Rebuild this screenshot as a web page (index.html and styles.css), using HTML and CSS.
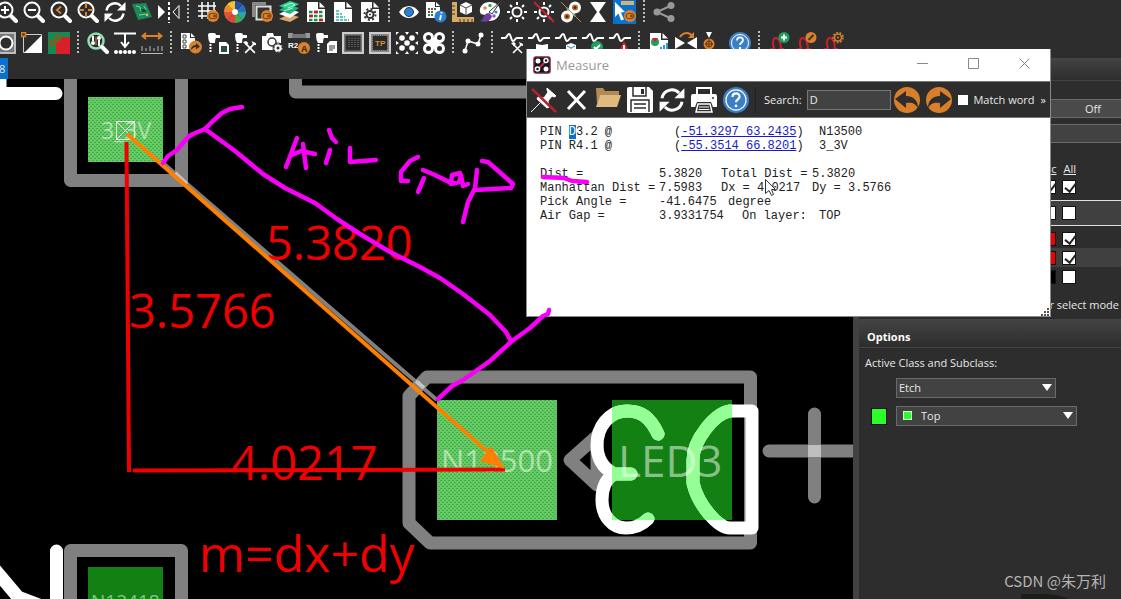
FILE: index.html
```
<!DOCTYPE html>
<html lang="en">
<head>
    <meta charset="UTF-8">
    <meta name="viewport" content="width=device-width, initial-scale=1.0">
    <title>Measure - PCB Editor</title>
    <link rel="stylesheet" href="styles.css">
</head>
<body>
    <!-- shared icon parts -->
    <svg class="sprite" aria-hidden="true">
        <symbol id="mag" viewBox="0 0 22 22"><circle cx="9" cy="9" r="7.5" fill="none" stroke="#fff" stroke-width="2"/><path d="M15 15l5 5" stroke="#fff" stroke-width="4" stroke-linecap="round"/></symbol>
        <symbol id="refresh" viewBox="0 0 22 22"><path d="M2.500 9.500A8.500 8.500 0 0 1 17 5M19.500 12.500A8.500 8.500 0 0 1 5 17" fill="none" stroke="#fff" stroke-width="2.500"/><path d="M21.500 1v8.500H13zM.500 21v-8.500H9z" fill="#fff"/></symbol>
        <symbol id="doc" viewBox="0 0 22 22"><path d="M2 1h11v7h7v13H2zM14.500 1l5.500 5.500h-5.500z" fill="#fff"/></symbol>
        <symbol id="pill" viewBox="0 0 12 12"><circle cx="6" cy="6" r="6" fill="#d9822b"/><rect x="2" y="3.500" width="8" height="5" rx="2.500" fill="none" stroke="#6b3d10"/><circle cx="7.500" cy="6" r="1.300" fill="#6b3d10"/></symbol>
        <symbol id="drill" viewBox="0 0 22 22"><path d="M1 3q0-2 2-2h4q2 0 2 2h4v3H9q-1 1-1 5H3Q1 8 1 3z" fill="#fff"/><path d="M3.500 12v9" stroke="#fff" stroke-width="2" stroke-dasharray="2 1"/></symbol>
        <symbol id="wave" viewBox="0 0 22 22"><path d="M0 6h4c2 0 2-4 4-4s2 7 4 7 2-3 4-3h6" fill="none" stroke="#fff" stroke-width="2"/></symbol>
        <symbol id="cross-tools" viewBox="0 0 12 12"><path d="M2 11l9-9M2 2l9 9" stroke="#fff" stroke-width="1.600"/><path d="M0 1l3 3 2-2-2-2M8 0l1 3 3 1V2" fill="#fff"/></symbol>
        <symbol id="help" viewBox="0 0 22 22"><circle cx="11" cy="11" r="11" fill="#3d7fc4"/><circle cx="11" cy="11" r="8.500" fill="none" stroke="#fff"/><path d="M8 8.500c0-4 6-4 6-.500 0 2.500-3 2.500-3 5" fill="none" stroke="#fff" stroke-width="1.800"/><circle cx="11" cy="16" r="1.200" fill="#fff"/></symbol>
        <symbol id="route" viewBox="0 0 22 22"><path d="M1 18l6-2M6 17C4 10 5 6 8 6s5 5 5 12M11 17h5" fill="none" stroke="#c8202c" stroke-width="2"/></symbol>
    </svg>

    <div class="app">
        <header class="toolbars">
            <div class="toolbar toolbar-view">
                <button class="tool" aria-label="Zoom in"><svg viewBox="0 0 22 22"><use href="#mag"/><path d="M5 9h8M9 5v8" stroke="#fff" stroke-width="2"/></svg></button>
                <button class="tool" aria-label="Zoom out"><svg viewBox="0 0 22 22"><use href="#mag"/><path d="M5 9h8" stroke="#fff" stroke-width="2"/></svg></button>
                <button class="tool" aria-label="Zoom previous"><svg viewBox="0 0 22 22"><use href="#mag"/><path d="M11 5.500L7 9l4 3.500" fill="none" stroke="#d9822b" stroke-width="2"/></svg></button>
                <button class="tool" aria-label="Zoom center"><svg viewBox="0 0 22 22"><use href="#mag"/><path d="M2 9h5M11 9h5M9 2v5M9 11v5" stroke="#d9822b" stroke-width="2"/></svg></button>
                <button class="tool" aria-label="Redraw"><svg viewBox="0 0 22 22"><use href="#refresh"/></svg></button>
                <button class="tool" aria-label="3D view"><svg viewBox="0 0 22 22"><path d="M1 3l14-1 6 14-14 3z" fill="#1c8a58"/><path d="M5 5l4 1 1 4M8 14l9-1M13 5l2 4" fill="none" stroke="#7ed0a0"/><path d="M10 8h4l1 3h-4z" fill="#0d5233"/><path d="M15 13h2v2h-2z" fill="#e6b85c"/></svg></button>
                <button class="tool" aria-label="Flip"><svg viewBox="0 0 22 22"><path d="M0 4l7 7-7 7z" fill="#fff"/><path d="M11 1v21" stroke="#fff" stroke-width="2" stroke-dasharray="3 2"/><path d="M21 4.500L15 11l6 6.500z" fill="none" stroke="#fff"/></svg></button>
                <span class="sep"></span>
                <button class="tool" aria-label="Grid toggle"><svg viewBox="0 0 22 22"><path d="M5 1v17M11 1v17M17 1v9M1 5h18M1 10h18M1 15h9" stroke="#fff" stroke-width="1.500"/><use href="#pill" x="10" y="9" width="12" height="12"/></svg></button>
                <button class="tool" aria-label="Color">
                    <svg viewBox="0 0 22 22">
                        <g fill="none" stroke-width="8">
                            <circle cx="11" cy="11" r="7" pathLength="8" stroke="#2c6fb7" stroke-dasharray="1 7" stroke-dashoffset="1"/>
                            <circle cx="11" cy="11" r="7" pathLength="8" stroke="#2aa7a0" stroke-dasharray="1 7"/>
                            <circle cx="11" cy="11" r="7" pathLength="8" stroke="#4aa84a" stroke-dasharray="1 7" stroke-dashoffset="-1"/>
                            <circle cx="11" cy="11" r="7" pathLength="8" stroke="#e0453a" stroke-dasharray="1 7" stroke-dashoffset="-2"/>
                            <circle cx="11" cy="11" r="7" pathLength="8" stroke="#e0553a" stroke-dasharray="1 7" stroke-dashoffset="-3"/>
                            <circle cx="11" cy="11" r="7" pathLength="8" stroke="#ee8a2a" stroke-dasharray="1 7" stroke-dashoffset="-4"/>
                            <circle cx="11" cy="11" r="7" pathLength="8" stroke="#f2c230" stroke-dasharray="1 7" stroke-dashoffset="-5"/>
                            <circle cx="11" cy="11" r="7" pathLength="8" stroke="#274f9c" stroke-dasharray="1 7" stroke-dashoffset="-6"/>
                        </g>
                        <circle cx="11" cy="11" r="3" fill="#fff"/>
                    </svg>
                </button>
                <button class="tool" aria-label="Shadow toggle"><svg viewBox="0 0 22 22"><path d="M1 1h14v3H4v12H1z" fill="#8a8a8a"/><rect x="5.500" y="5.500" width="14" height="13" fill="#333" stroke="#ddd" stroke-width="2"/><use href="#pill" x="10" y="9" width="12" height="12"/></svg></button>
                <button class="tool" aria-label="Cross section"><svg viewBox="0 0 22 22"><path d="M1 18l10-5 10 3-9 5z" fill="#dda36c"/><path d="M1 13l10-5 10 3-9 6z" fill="#fff"/><path d="M1 9l10-5 10 3-9 6z" fill="#1fb57c"/><path d="M1 5l11-5 9 3-10 6z" fill="#27d491"/><path d="M6 5l8-3 3 2-7 3M6 10l9-3" fill="none" stroke="#fff" stroke-width=".7"/></svg></button>
                <button class="tool" aria-label="Constraint manager"><svg viewBox="0 0 22 22"><use href="#doc"/><path d="M4 11h14M4 15h14M4 19h14" stroke="#1d8a4c" stroke-width="2.500" stroke-dasharray="3.500 1.500"/><path d="M9 11h4M4 15h4M14 19h4" stroke="#c8202c" stroke-width="2.500"/></svg></button>
                <button class="tool" aria-label="Layers report"><svg viewBox="0 0 22 22"><use href="#doc"/><path d="M4 10h3M4 13h6M4 16h9M4 19h13" stroke="#35b0a7" stroke-width="1.500" stroke-dasharray="3 1"/></svg></button>
                <button class="tool" aria-label="Parameters"><svg viewBox="0 0 22 22"><use href="#doc"/><circle cx="11" cy="13.500" r="3.500" fill="none" stroke="#333" stroke-width="2"/><circle cx="11" cy="13.500" r="5.500" fill="none" stroke="#333" stroke-width="2" stroke-dasharray="2 2.300"/><circle cx="11" cy="13.500" r="1" fill="#333"/></svg></button>
                <span class="sep"></span>
                <button class="tool" aria-label="Visibility"><svg viewBox="0 0 22 22"><path d="M1 11C6 3 16 3 21 11 16 19 6 19 1 11z" fill="#fff"/><circle cx="11" cy="11" r="4.500" fill="#2f7fd0" stroke="#1c4068"/></svg></button>
                <button class="tool" aria-label="Show element"><svg viewBox="0 0 22 22"><path d="M1 1h9v5h5v11H1zM11 1l4 4h-4z" fill="#fff"/><path d="M3 8h8M3 11h6M3 14h6" stroke="#1d8a4c" stroke-width="2" stroke-dasharray="2 1"/><path d="M6 8h2M3 11h2" stroke="#c8202c" stroke-width="2"/><circle cx="15.500" cy="15.500" r="6" fill="#2f7fd0"/><path d="M16 14l-1 5M16.500 11v1.500" stroke="#fff" stroke-width="1.800"/></svg></button>
                <button class="tool" aria-label="Show measure"><svg viewBox="0 0 22 22"><path d="M0 1h5v15h17v5H0z" fill="#d6ab68"/><path d="M0 5h3M0 9h3M0 13h3M8 21v-3M12 21v-3M16 21v-3M20 21v-3" stroke="#4a3310"/><path d="M14 1l6 3v7l-6 3-6-3V4z" fill="#fff"/><path d="M8 4l6 3 6-3M14 7v7" fill="none" stroke="#444"/></svg></button>
                <button class="tool" aria-label="Assign color"><svg viewBox="0 0 22 22"><path d="M11 1C4 1 0 6 1 11c1 4 4 2 6 3 2 2-2 5 3 6 7 0 11-5 11-10S17 1 11 1z" fill="#fff"/><circle cx="6" cy="7" r="1.700" fill="#dd8a3c"/><circle cx="11" cy="4.500" r="1.700" fill="#38a169"/><circle cx="15" cy="15" r="1.700" fill="#8a5bb5"/><circle cx="17" cy="11" r="1.500" fill="#2f7fd0"/><path d="M22 0L10 11l3 2z" fill="#fff" stroke="#333"/><path d="M10 12c-6 0-4 6-9 8 6 2 11 0 12-5z" fill="#6b3fa0"/></svg></button>
                <button class="tool" aria-label="Highlight"><svg viewBox="0 0 22 22"><circle cx="11" cy="11" r="4.500" fill="none" stroke="#fff" stroke-width="2"/><path d="M11 1v3M11 18v3M1 11h3M18 11h3M4 4l2 2M16 16l2 2M18 4l-2 2M4 18l2-2" stroke="#fff" stroke-width="2"/></svg></button>
                <button class="tool" aria-label="Dehighlight"><svg viewBox="0 0 22 22"><circle cx="11" cy="11" r="4.500" fill="none" stroke="#fff" stroke-width="2"/><path d="M11 1v3M11 18v3M1 11h3M18 11h3M16 16l2 2M18 4l-2 2M4 18l2-2" stroke="#fff" stroke-width="2"/><path d="M1 1l20 20" stroke="#c8202c" stroke-width="2"/></svg></button>
                <button class="tool" aria-label="Via gap"><svg viewBox="0 0 22 22"><path d="M4 18L18 4" stroke="#fff" stroke-width="7"/><path d="M7 7l8 8" stroke="#35d5e0" stroke-width="2"/><g fill="#c96f20" stroke="#fff" stroke-width="3"><circle cx="15" cy="6.500" r="4.500"/><circle cx="7" cy="15.500" r="4.500"/></g><circle cx="15" cy="6.500" r="1.500" fill="#333"/><circle cx="7" cy="15.500" r="1.500" fill="#333"/><path d="M1 1l20 20" stroke="#d9822b"/></svg></button>
                <button class="tool" aria-label="Waive"><svg viewBox="0 0 22 22"><path d="M3 1h16l-7 10 7 10H3l7-10z" fill="#fff"/></svg></button>
                <button class="tool active" aria-label="Select toggle"><svg viewBox="0 0 22 22"><path d="M7 0h13v4H7z" fill="#d6b078"/><use href="#pill" x="10" y="9" width="12" height="12"/><path d="M1 1l10 10-4 .5 3 7-3 1-2.500-7L1 16z" fill="#fff"/></svg></button>
                <span class="sep"></span>
                <button class="tool" aria-label="Share"><svg viewBox="0 0 22 22"><path d="M17 5L4 11l13 6" fill="none" stroke="#999" stroke-width="2"/><g fill="#999"><circle cx="18" cy="4.500" r="3.500"/><circle cx="4" cy="11" r="3.500"/><circle cx="18" cy="17.500" r="3.500"/></g></svg></button>
            </div>
            <div class="toolbar toolbar-edit">
                <button class="tool" aria-label="Void circle"><svg viewBox="0 0 22 22"><rect width="22" height="22" fill="#bbb"/><rect x="2" y="2" width="18" height="18" fill="#777"/><circle cx="12" cy="11" r="6.500" fill="#2d2d2d" stroke="#fff" stroke-width="2"/></svg></button>
                <button class="tool" aria-label="Shape edit"><svg viewBox="0 0 22 22"><path d="M2.500 2.500h18v18h-18z" fill="none" stroke="#ccc"/><path d="M21 3v18H3z" fill="#fff"/><path d="M.5 .5h4v4h-4z" fill="#5a3a1a" stroke="#d9822b" stroke-width="1.500"/></svg></button>
                <button class="tool" aria-label="Island delete"><svg viewBox="0 0 22 22"><rect width="22" height="22" fill="#148a55"/><path d="M8 22V12l6-7h8v17z" fill="#d81f2a"/><g fill="#148a55" stroke="#8a5a1c" stroke-width="2"><circle cx="10" cy="6" r="2.500"/><circle cx="5" cy="11" r="2.500"/></g></svg></button>
                <span class="sep"></span>
                <button class="tool" aria-label="Find net"><svg viewBox="0 0 22 22"><path d="M6 4v5M12 8v6" stroke="#fff" stroke-width="2"/><circle cx="6" cy="11" r="2" fill="#fff"/><circle cx="12" cy="6" r="2" fill="#fff"/><path d="M9 5v8" stroke="#d9822b"/><circle cx="9" cy="9" r="7.500" fill="none" stroke="#8fe0b5" stroke-width="2.500"/><path d="M15 15l5 5" stroke="#fff" stroke-width="4" stroke-linecap="round"/></svg></button>
                <button class="tool" aria-label="Snap to"><svg viewBox="0 0 22 22"><path d="M0 1.500h22M11 2v12M7 10l4 5 4-5" fill="none" stroke="#fff" stroke-width="2"/><path d="M2 20h20" stroke="#fff" stroke-width="4" stroke-dasharray="0 4.500" stroke-linecap="round"/></svg></button>
                <button class="tool" aria-label="Dimension"><svg viewBox="0 0 22 22"><path d="M3 4h16M5 1L1.500 4 5 7M17 1l3.500 3L17 7" fill="none" stroke="#d9822b" stroke-width="2"/><path d="M0 21.500h22M1 14v5M5 16v3M9 14v5M13 16v3M17 14v5M21 14v5" stroke="#bbb"/></svg></button>
                <span class="sep"></span>
                <button class="tool" aria-label="Export"><svg viewBox="0 0 22 22"><path d="M1 1h9v5h5v11H1zM11 1l4 4h-4z" fill="#fff"/><path d="M3 3h3v3H3zM3 8h3v3H3zM3 13h3v3H3z" fill="none" stroke="#444"/><circle cx="15.500" cy="15" r="6.500" fill="#d9822b"/><path d="M11 18c0-4 3-5 5-5v-2l4 3.500-4 3V15c-2 0-3 1-5 3z" fill="#333"/></svg></button>
                <button class="tool" aria-label="NC drill"><svg viewBox="0 0 22 22"><use href="#drill"/><path d="M12 10h7l3 3v9H12z" fill="#fff"/><path d="M14 14h6v6h-6z" fill="#2b4b50"/></svg></button>
                <button class="tool" aria-label="NC tools"><svg viewBox="0 0 22 22"><use href="#drill"/><use href="#cross-tools" x="9" y="9" width="13" height="13"/></svg></button>
                <button class="tool" aria-label="Artwork"><svg viewBox="0 0 22 22"><path d="M1 4h4l1-3h6l1 3h7v7h-5v7H1z" fill="#fff"/><circle cx="11" cy="10" r="4" fill="none" stroke="#333" stroke-width="1.500"/><circle cx="17" cy="16" r="5.500" fill="#2d2d2d"/><circle cx="17" cy="16" r="2.500" fill="none" stroke="#fff" stroke-width="2"/><circle cx="17" cy="16" r="4" fill="none" stroke="#fff" stroke-dasharray="2 1.500"/></svg></button>
                <button class="tool" aria-label="Rename reference"><svg viewBox="0 0 22 22"><path d="M0 1h5v5H0zM17 1h5v5h-5z" fill="#999"/><path d="M4 2h14v4H4z" fill="#777"/><text x="0" y="16" class="glyph-ref">R2</text><circle cx="16" cy="16" r="6" fill="#d9822b"/><text x="13" y="20" class="glyph-a">A</text></svg></button>
                <button class="tool" aria-label="Drill legend"><svg viewBox="0 0 22 22"><use href="#drill"/><path d="M15 9h7v12H12v-9z" fill="#fff"/><path d="M14 14h6M14 16h6M14 18h4" stroke="#333"/></svg></button>
                <button class="tool" aria-label="Fanout"><svg viewBox="0 0 22 22"><rect x="1" y="1" width="20" height="20" fill="#777" stroke="#ccc" stroke-width="2"/><rect x="4" y="4" width="14" height="14" fill="#292929" stroke="#333"/><path d="M7 6v10M10 6v10M13 6v10M16 6v10" stroke="#888" stroke-dasharray="1 1"/></svg></button>
                <button class="tool" aria-label="Test prep"><svg viewBox="0 0 22 22"><rect x="1" y="1" width="20" height="20" fill="#888" stroke="#ccc" stroke-width="2"/><rect x="4" y="4" width="14" height="14" fill="#292929" stroke="#333" stroke-dasharray="1 1"/><text x="6" y="14" class="glyph-tp">TP</text></svg></button>
                <button class="tool" aria-label="Via array"><svg viewBox="0 0 22 22"><g fill="#fff"><circle cx="6" cy="6" r="2.800"/><circle cx="16" cy="6" r="2.800"/><circle cx="11" cy="11" r="2.800"/><circle cx="6" cy="16" r="2.800"/><circle cx="16" cy="16" r="2.800"/><path d="M0 0h3L0 3zM9 0h4l-2 3zM19 0h3v3zM0 9l3 2-3 2zM22 9l-3 2 3 2zM0 19l3 3H0zM9 22l2-3 2 3zM22 19v3h-3z"/></g></svg></button>
                <button class="tool" aria-label="Stitch vias"><svg viewBox="0 0 22 22"><path d="M6 6h10v10H6z" fill="#fff"/><g fill="#2d2d2d" stroke="#fff" stroke-width="3"><circle cx="5.500" cy="5.500" r="4"/><circle cx="16.500" cy="5.500" r="4"/><circle cx="5.500" cy="16.500" r="4"/><circle cx="16.500" cy="16.500" r="4"/></g></svg></button>
                <span class="sep"></span>
                <button class="tool" aria-label="Polyline"><svg viewBox="0 0 22 22"><path d="M3 19L6 9l10 3 3-9" fill="none" stroke="#fff" stroke-width="1.500"/><g fill="#fff"><circle cx="3" cy="19" r="2.500"/><circle cx="6" cy="9" r="2.500"/><circle cx="16" cy="12" r="2.500"/><circle cx="19" cy="3" r="2.500"/></g></svg></button>
                <span class="sep"></span>
                <button class="tool" aria-label="Signal setup"><svg viewBox="0 0 22 22"><use href="#wave"/><use href="#cross-tools" x="10" y="10" width="12" height="12"/></svg></button>
                <button class="tool" aria-label="Signal library"><svg viewBox="0 0 22 22"><use href="#wave"/><path d="M8 12l6 1 6-1v8H8z" fill="#fff"/></svg></button>
                <button class="tool" aria-label="Signal model"><svg viewBox="0 0 22 22"><use href="#wave"/><path d="M11 13l5-2 5 2v7H11z" fill="#fff"/><path d="M12 14l4 2 4-2M16 16v5" fill="none" stroke="#2b8fb0"/></svg></button>
                <button class="tool" aria-label="Signal audit"><svg viewBox="0 0 22 22"><use href="#wave"/><circle cx="15" cy="15" r="6" fill="#1fa05a"/><path d="M12 15l2 2 4-4" fill="none" stroke="#fff" stroke-width="2"/></svg></button>
                <button class="tool" aria-label="Signal errors"><svg viewBox="0 0 22 22"><use href="#wave"/><path d="M15 9l6 12H9z" fill="#d81f2a"/><path d="M15 13v5" stroke="#fff" stroke-width="2"/></svg></button>
                <span class="sep"></span>
                <button class="tool" aria-label="Reports"><svg viewBox="0 0 22 22"><use href="#doc"/><circle cx="7" cy="10" r="4" fill="#1fa05a"/><path d="M4 6h6l-3 4z" fill="#d81f2a"/><path d="M13 20v-5M16 20v-7M19 20v-9" stroke="#2f9fd0" stroke-width="2"/></svg></button>
                <button class="tool" aria-label="Swap"><svg viewBox="0 0 22 22"><path d="M0 5l10 6-10 6zM22 5l-10 6 10 6z" fill="#fff"/><path d="M5 5c3-5 9-5 12-1M5 18c3 4 9 4 12 0" fill="none" stroke="#d9822b" stroke-width="2"/><path d="M19 0v6h-6z" fill="#d9822b"/></svg></button>
                <button class="tool" aria-label="Drill target"><svg viewBox="0 0 22 22"><path d="M4 0h6L7 6z" fill="#fff"/><circle cx="7" cy="12" r="5.500" fill="#d9822b"/><circle cx="7" cy="12" r="3" fill="none" stroke="#5a3310"/><path d="M3 12h8M7 6v9" stroke="#5a3310"/></svg></button>
                <button class="tool" aria-label="Help"><svg viewBox="0 0 22 22"><use href="#help"/></svg></button>
                <span class="sep"></span>
                <button class="tool" aria-label="Add route"><svg viewBox="0 0 22 22"><use href="#route"/><circle cx="16" cy="5.500" r="5.500" fill="#1fa05a"/><path d="M13 5.500h6M16 2.500v6" stroke="#fff" stroke-width="2"/></svg></button>
                <button class="tool" aria-label="Edit route"><svg viewBox="0 0 22 22"><use href="#route"/><circle cx="16" cy="5.500" r="5.500" fill="#d9822b"/><path d="M13.500 8l5-5" stroke="#333" stroke-width="2"/></svg></button>
                <button class="tool" aria-label="Route settings"><svg viewBox="0 0 22 22"><use href="#route"/><circle cx="16" cy="5.500" r="3.500" fill="none" stroke="#d9822b" stroke-width="1.500"/><circle cx="16" cy="5.500" r="5" fill="none" stroke="#d9822b" stroke-width="1.500" stroke-dasharray="2 1.500"/><circle cx="16" cy="5.500" r="1" fill="#d9822b"/></svg></button>
            </div>
        </header>

        <div class="workspace">
            <main class="editor">
                <div class="tabs"><span class="tab">8</span></div>
                <svg class="board" viewBox="0 79 853 520" preserveAspectRatio="xMinYMin slice" role="img" aria-label="PCB layout">
                    <defs>
                        <pattern id="hatch" width="4" height="4" patternUnits="userSpaceOnUse">
                            <rect width="4" height="4" fill="#56d656"/>
                            <path d="M0 .5h2M2 2.500h2" stroke="#748a74"/>
                        </pattern>
                        <clipPath id="led-pad"><rect x="612" y="400" width="120" height="120"/></clipPath>
                        <g id="silk" fill="none" stroke-width="13" stroke-linecap="round" stroke-linejoin="round">
                            <path d="M658 434C650 417 641 411 627 411C609 411 597 427 597 445C597 459 603 468 614 474H631M614 474C604 480 602 490 602 500C602 516 612 528 626 528C636 528 643 524 648 519"/>
                            <path d="M752 411H730C715 413 693 440 693 460V483C698 505 718 528 730 528H752Z"/>
                        </g>
                    </defs>

                    <!-- package outlines -->
                    <g fill="none" stroke="#808080" stroke-width="13" stroke-linejoin="round" stroke-linecap="round">
                        <path d="M70.500 70V180.500H181.500V70"/>
                        <path d="M295.500 70V92H540"/>
                        <path d="M70.500 610V550.500H181.500V610"/>
                        <path d="M427 377H750.500V543H430L409 523V396Z"/>
                        <path d="M597 436L570 460L597 485Z"/>
                        <path d="M769 451H860M814.500 414V497"/>
                    </g>
                    <path d="M808 445h13v12h-13z" fill="#bfbfbf"/>

                    <!-- pads -->
                    <rect x="88" y="97" width="75" height="65" fill="url(#hatch)"/>
                    <rect x="437" y="400" width="120" height="120" fill="url(#hatch)"/>
                    <rect x="88" y="567" width="75" height="40" fill="#138013"/>
                    <rect x="612" y="400" width="120" height="120" fill="#138013"/>

                    <!-- silkscreen -->
                    <g fill="none" stroke="#fff" stroke-width="13" stroke-linecap="round">
                        <path d="M-5 93.500H56M0 70V93"/>
                        <path d="M56.500 551V610M-8 566L18 597L44 607"/>
                    </g>
                    <use href="#silk" stroke="#fff"/>
                    <use href="#silk" stroke="#94ff94" clip-path="url(#led-pad)"/>

                    <g class="net-names">
                        <text x="101" y="139" font-size="23">3_3V</text>
                        <text x="91" y="608" font-size="19">N12418</text>
                        <text x="441" y="472" font-size="31">N13500</text>
                        <text x="618" y="477" font-size="44">LED3</text>
                    </g>
                    <path d="M116.500 121.500h18v18h-18zl18 18m0-18l-18 18" fill="none" stroke="#e0f5e0"/>

                    <!-- measured distances -->
                    <path d="M163 163L437 400" stroke="#808080" stroke-width="4"/>
                    <path d="M175 173L187 184M416 381L424 388" stroke="#c4c4c4" stroke-width="4"/>
                    <g class="distances">
                        <text x="266" y="260">5.3820</text>
                        <text x="129" y="328">3.5766</text>
                        <text x="231" y="480">4.0217</text>
                        <text class="formula" x="199" y="572">m=dx+dy</text>
                    </g>
                    <path d="M126.500 142L129 472M133 470.500L505 469.500" stroke="#f00000" stroke-width="4"/>
                    <path d="M127 134L490 454" stroke="#ff8000" stroke-width="4"/>
                    <path d="M505 469L491 446L480 461Z" fill="#ff8000"/>
                </svg>
            </main>

            <aside class="sidebar">
                <section class="visibility">
                    <div class="panel-head"></div>
                    <button class="off-button">Off</button>
                    <input class="layer-filter" type="text" aria-label="Layer filter">
                    <div class="check-links"><a href="#">Drc</a><a href="#">All</a></div>
                    <div class="check-row"><input type="checkbox" aria-label="Drc" checked><input type="checkbox" aria-label="All" checked></div>
                    <div class="check-row boxed"><input type="checkbox" aria-label="Drc layers"><input type="checkbox" aria-label="All layers"></div>
                    <div class="check-row"><span class="color-box red"></span><input type="checkbox" aria-label="Layer 1" checked></div>
                    <div class="check-row alt"><span class="color-box red"></span><input type="checkbox" aria-label="Layer 2" checked></div>
                    <div class="check-row"><span class="color-box black"></span><input type="checkbox" aria-label="Layer 3"></div>
                    <p class="mode-hint">for select mode</p>
                </section>
                <section class="options">
                    <h2 class="panel-head">Options</h2>
                    <label class="options-label" for="class-select">Active Class and Subclass:</label>
                    <div class="option-row">
                        <span class="select-box etch"><select id="class-select"><option>Etch</option></select></span>
                    </div>
                    <div class="option-row">
                        <span class="layer-color"></span>
                        <span class="select-box top"><span class="layer-chip"></span><select aria-label="Subclass"><option>Top</option></select></span>
                    </div>
                </section>
                <p class="watermark">CSDN @朱万利</p>
            </aside>
        </div>

        <section class="window" aria-label="Measure">
            <div class="title-bar">
                <svg class="window-icon" viewBox="0 0 18 18"><rect x="1" y="1" width="16" height="16" rx="2" fill="#0d1824" stroke="#7c2034" stroke-width="1.500"/><path d="M4 14L14 4" stroke="#d8203c" stroke-width="2"/><circle cx="5" cy="5" r="2.500" fill="#fff"/><circle cx="13" cy="13" r="2.500" fill="#fff"/><circle cx="13" cy="4.500" r="2" fill="#111" stroke="#fff" stroke-width="1.500"/><circle cx="4.500" cy="13" r="2" fill="#111" stroke="#fff" stroke-width="1.500"/></svg>
                <h1>Measure</h1>
                <button aria-label="Minimize"><svg viewBox="0 0 12 12"><path d="M0 6.500h11"/></svg></button>
                <button aria-label="Maximize"><svg viewBox="0 0 12 12"><path d="M.5 1.500h10v10h-10z"/></svg></button>
                <button aria-label="Close"><svg viewBox="0 0 12 12"><path d="M.5 1.500l10 10M10.500 1.500l-10 10"/></svg></button>
            </div>
            <div class="window-tools">
                <button aria-label="Pin"><svg viewBox="0 0 26 26"><path d="M16 1l9 8-2 1-2-1-4 5 1 6-2 1-10-9 1-2 6 1 4-6-1-2zM9 16L0 25" fill="#fff" stroke="#fff" stroke-width="1"/><path d="M1 2l24 23" stroke="#b8222c" stroke-width="2.500"/></svg></button>
                <button aria-label="Close report"><svg viewBox="0 0 26 26"><path d="M5 4l17 18M22 4L5 22" stroke="#fff" stroke-width="3"/></svg></button>
                <button aria-label="Open"><svg viewBox="0 0 26 26"><path d="M1 1h7l2 3h14v5H5L2 17z" fill="#b58a52"/><path d="M5 8h21l-4 12H1z" fill="#dfb97e"/></svg></button>
                <button aria-label="Save"><svg viewBox="0 0 26 26"><path d="M0 2q0-2 2-2h20l4 4v20q0 2-2 2H2q-2 0-2-2z" fill="#fff"/><path d="M6 0v9h13V0M4 25V13h18v12" fill="none" stroke="#2d2d2d" stroke-width="1.500"/><path d="M14 2h3v5h-3z" fill="#2d2d2d"/><path d="M7 17h12M7 21h12" stroke="#2d2d2d" stroke-width="1.500"/></svg></button>
                <button aria-label="Refresh"><svg viewBox="0 0 22 22"><use href="#refresh"/></svg></button>
                <button aria-label="Print"><svg viewBox="0 0 26 26"><path d="M6 7V1h14v6" fill="none" stroke="#fff" stroke-width="2"/><path d="M0 9q0-2 2-2h22q2 0 2 2v11h-4l-2-5H6l-2 5H0z" fill="#fff"/><path d="M7 17h12l2 8H5z" fill="none" stroke="#fff" stroke-width="1.500"/><path d="M8 20h10M7.500 22.500h11" stroke="#fff"/><circle cx="22" cy="11" r="1" fill="#333"/></svg></button>
                <button aria-label="Help"><svg viewBox="0 0 22 22"><use href="#help"/></svg></button>
                <span class="tools-rule"></span>
                <label for="search">Search:</label>
                <input class="search" id="search" type="text" value="D">
                <button aria-label="Find previous"><svg viewBox="0 0 26 26"><circle cx="13" cy="13" r="13" fill="#d97f2c"/><path d="M1 12l11-8v5c8 0 12 5 12 12-3-5-6-6-12-5v5z" fill="#2d2d2d"/></svg></button>
                <button aria-label="Find next"><svg viewBox="0 0 26 26"><circle cx="13" cy="13" r="13" fill="#d97f2c"/><path d="M25 12L14 4v5C6 9 2 14 2 21c3-5 6-6 12-5v5z" fill="#2d2d2d"/></svg></button>
                <label class="match"><input type="checkbox"> Match word</label>
                <span class="more">»</span>
            </div>
            <div class="report">
                <div class="line"><span>PIN <mark>D</mark>3.2 @</span><span class="at-point">(<a href="#">-51.3297 63.2435</a>)</span><span class="at-net">N13500</span></div>
                <div class="line"><span>PIN R4.1 @</span><span class="at-point">(<a href="#">-55.3514 66.8201</a>)</span><span class="at-net">3_3V</span></div>
                <div class="line"></div>
                <div class="line"><span>Dist =</span><span class="at-value">5.3820</span><span class="at-second">Total Dist =</span><span class="at-third">5.3820</span></div>
                <div class="line"><span>Manhattan Dist =</span><span class="at-value">7.5983</span><span class="at-second">Dx = 4.0217</span><span class="at-third">Dy = 3.5766</span></div>
                <div class="line"><span>Pick Angle =</span><span class="at-value">-41.6475</span><span class="at-unit">degree</span></div>
                <div class="line"><span>Air Gap =</span><span class="at-value">3.9331754</span><span class="at-layer">On layer:</span><span class="at-net">TOP</span></div>
            </div>
            <svg class="grip" viewBox="0 0 9 9"><path d="M0 8h9M3 5h6M6 2h3" stroke="#555" stroke-width="2" stroke-dasharray="2 1"/></svg>
        </section>

        <!-- pen annotations and pointer, drawn over everything -->
        <svg class="ink" viewBox="0 0 1121 599" preserveAspectRatio="xMinYMin slice" aria-hidden="true">
            <g fill="none" stroke="#f800f8" stroke-width="4.500" stroke-linecap="round" stroke-linejoin="round">
                <path d="M242 107L230 109L222 113L213 121L205 129L193 134L188 137L177 150L168 156L163 163"/>
                <path d="M205 129L235 151L263 174L285 188L315 203L337 219L360 234L390 252L420 267L440 278L463 294L490 315L506 332L511 341"/>
                <path d="M438 399L452 386L463 380L490 361L512 341L530 328L543 316L548 314L549 310"/>
                <path d="M297 138L286 167M303 144L306 168M292 155L301 151L315 154"/>
                <path d="M329 130L332 138L336 142M330 150L326 163"/>
                <path d="M350 148V162L376 160"/>
                <path d="M418 157L410 161L401 172V181H408"/>
                <path d="M424 178L418 192M423 170L435 175L449 182"/>
                <path d="M460 173L452 175L451 184L459 182L461 175L463 186L468 184"/>
                <path d="M477 170L475 188L468 202L463 222M482 161L488 162L513 184L511 188L475 190"/>
                <path d="M543 177L564 178L572 181L587 182"/>
            </g>
            <path d="M765.500 179.500v14l3.500-3 2.500 5 2-1-2-5h4z" fill="#fff" stroke="#333"/>
        </svg>
    </div>
</body>
</html>
```
FILE: styles.css
```
* {
    box-sizing: border-box;
}
body {
    margin: 0;
    background-color: #2d2d2d;
    color: #e8e8e8;
    font-family: "Open Sans", "Noto Sans CJK SC", sans-serif;
    font-size: 11px;
    line-height: 16px;
}
button, input, select {
    font: inherit;
    color: inherit;
    margin: 0;
}
button {
    padding: 0;
    border: 0;
    background: none;
}
.sprite {
    position: absolute;
    width: 0;
    height: 0;
}
.app {
    position: relative;
    display: flex;
    flex-direction: column;
    height: 100vh;
    overflow: hidden;
}

/* toolbars */
.toolbars {
    display: flex;
    flex-direction: column;
    gap: 7px;
    padding-bottom: 3px;
    overflow: hidden;
}
.toolbar {
    display: flex;
}
.toolbar-view {
    margin-left: -7px;
}
.toolbar-edit {
    margin-left: -9px;
}
.tool {
    flex: none;
    display: flex;
    align-items: center;
    justify-content: center;
    width: 27px;
    height: 24px;
}
.tool svg {
    width: 22px;
    height: 22px;
}
.tool.active {
    background: #0a72cc content-box;
    padding: 0 2px;
}
.sep {
    flex: none;
    width: 2px;
    margin: 0 5px;
    background: repeating-linear-gradient(#bbb 0 2px, transparent 2px 4px);
}
.glyph-ref, .glyph-a, .glyph-tp {
    font-family: "Liberation Sans", sans-serif;
    font-weight: bold;
    font-size: 8px;
    fill: #fff;
}
.glyph-a {
    font-size: 9px;
    fill: #222;
}
.glyph-tp {
    fill: #d9932b;
}

/* layout */
.workspace {
    flex: 1;
    display: grid;
    grid-template-columns: 1fr 268px;
    min-height: 0;
}
.editor {
    display: flex;
    flex-direction: column;
    min-width: 0;
    min-height: 0;
}
.tabs {
    height: 21px;
    flex: none;
}
.tab {
    display: block;
    width: 8px;
    height: 21px;
    line-height: 22px;
    background: #0a72cc;
    text-indent: -1px;
}
.board {
    flex: 1;
    min-height: 0;
    width: 100%;
    background: #000;
}
.net-names {
    fill: #fff;
    fill-opacity: .5;
    font-family: "Open Sans", sans-serif;
}
.distances {
    fill: #f00000;
    font-family: "Open Sans", sans-serif;
    font-size: 47px;
}
.formula {
    font-size: 50px;
}

/* right side panels */
.sidebar {
    position: relative;
    display: flex;
    flex-direction: column;
    border-left: 6px solid #424242;
    overflow: hidden;
}
.sidebar::after {
    content: "";
    position: absolute;
    right: 48px;
    bottom: -12px;
    width: 52px;
    height: 17px;
    border-radius: 0 60% 0 0;
    background: #1b1d1a;
}
.panel-head {
    margin: 0;
    height: 23px;
    background: linear-gradient(#444, #2d2d2d);
    border-bottom: 1px solid #444;
}
.visibility {
    display: flex;
    flex-direction: column;
    height: 261px;
}
.off-button {
    height: 19px;
    margin-top: 18px;
    padding-right: 20px;
    background: #4a4a4a;
    border: solid #6a6a6a;
    border-width: 1px 0;
    text-align: right;
}
.layer-filter {
    height: 19px;
    margin-top: 6px;
    background: #424242;
    border: solid #6a6a6a;
    border-width: 1px 0;
}
.check-links {
    display: flex;
    justify-content: flex-end;
    gap: 7px;
    margin-top: 18px;
    padding-right: 45px;
}
.check-links a {
    color: #e8e8e8;
}
.check-row {
    display: flex;
    align-items: center;
    justify-content: flex-end;
    gap: 6px;
    height: 19px;
    padding-right: 45px;
}
.check-row.boxed {
    height: 26px;
    margin: 4px 0 3px;
    background: #404040;
    border: solid #e0e0e0;
    border-width: 1px 0;
}
.check-row.alt {
    background: #404040;
}
.check-row input {
    appearance: none;
    width: 14px;
    height: 14px;
    background: #fff;
    border: 1px solid #111;
}
.check-row input:checked::after {
    content: "";
    display: block;
    width: 5px;
    height: 9px;
    margin: 0 0 0 4px;
    border: solid #222;
    border-width: 0 2px 2px 0;
    transform: rotate(38deg);
}
.color-box {
    width: 14px;
    height: 14px;
    border: 1px solid #111;
}
.color-box.red {
    background: #f00000;
}
.color-box.black {
    background: #000;
}
.mode-hint {
    margin: 11px 2px 0 0;
    text-align: right;
}
.options {
    display: flex;
    flex-direction: column;
    gap: 8px;
}
.options .panel-head {
    height: 29px;
    padding-left: 8px;
    font-size: 11px;
    line-height: 36px;
    color: #fff;
}
.options-label {
    padding-left: 6px;
    margin: -1px 0;
}
.option-row {
    display: flex;
    align-items: center;
    justify-content: flex-start;
    gap: 9px;
    padding-left: 12px;
    height: 20px;
}
.layer-color {
    width: 16px;
    height: 17px;
    background: #2aff2a;
    border: 1px solid #001a00;
}
.select-box {
    position: relative;
    display: flex;
    height: 20px;
}
.select-box select {
    appearance: none;
    width: 100%;
    padding: 0 2px;
    background: #424242;
    border: 1px solid #6a6a6a;
    border-radius: 0;
}
.select-box::after {
    content: "";
    position: absolute;
    right: 4px;
    top: 6px;
    border: solid transparent;
    border-width: 7px 5px 0;
    border-top-color: #fff;
}
.etch {
    width: 160px;
    margin-left: 25px;
}
.top {
    width: 181px;
}
.top select {
    padding-left: 24px;
}
.layer-chip {
    position: absolute;
    left: 7px;
    top: 5px;
    width: 9px;
    height: 9px;
    background: #2aff2a;
    border: 1px solid #d8ffd8;
}
.watermark {
    position: absolute;
    right: 15px;
    bottom: 8px;
    margin: 0;
    font-family: "Noto Sans CJK SC", sans-serif;
    font-size: 15px;
    line-height: 20px;
    color: #b4b4b4;
}

/* measure window */
.window {
    position: absolute;
    left: 526px;
    top: 49px;
    width: 525px;
    height: 268px;
    display: flex;
    flex-direction: column;
    background: #fff;
    border: solid #8a8a8a;
    border-width: 0 1px 1px;
    color: #222;
}
.title-bar {
    display: flex;
    align-items: center;
    height: 32px;
}
.window-icon {
    width: 18px;
    height: 18px;
    margin: 0 5px 0 6px;
}
.title-bar h1 {
    flex: 1;
    margin: 0;
    font-size: 13px;
    font-weight: normal;
    color: #999;
}
.title-bar button {
    width: 51px;
    height: 32px;
}
.title-bar button svg {
    width: 12px;
    height: 12px;
    fill: none;
    stroke: #888;
}
.window-tools {
    display: flex;
    align-items: center;
    gap: 6px;
    height: 37px;
    padding: 0 4px;
    background: #2d2d2d;
    border: solid #777;
    border-width: 1px 0;
    color: #e8e8e8;
}
.window-tools svg {
    display: block;
    width: 26px;
    height: 26px;
}
.tools-rule {
    width: 1px;
    height: 26px;
    margin-right: 2px;
    background: #222;
}
.search {
    flex: 1;
    min-width: 0;
    height: 20px;
    padding: 0 2px;
    margin: 0 -3px 0 -1px;
    background: #424242;
    border: 1px solid #777;
}
.match {
    display: flex;
    align-items: center;
    gap: 5px;
    white-space: nowrap;
}
.match input {
    appearance: none;
    width: 10px;
    height: 10px;
    background: #fff;
}
.report {
    padding: 7px 13px;
    font-family: "Liberation Mono", monospace;
    font-size: 12px;
    line-height: 14px;
}
.line {
    display: grid;
    grid-template-columns: [label] 119px [value] 15px [point] 47px [second] 7px [unit] 14px [layer] 70px [third] 7px [net] 1fr;
    height: 14px;
    white-space: nowrap;
}
.line span {
    grid-row: 1;
    width: 0;
}
.line .at-value { grid-column: value; }
.line .at-point { grid-column: point; }
.line .at-second { grid-column: second; }
.line .at-unit { grid-column: unit; }
.line .at-layer { grid-column: layer; }
.line .at-third { grid-column: third; }
.line .at-net { grid-column: net; }
.report a {
    color: #1a1acc;
}
.report mark {
    background: #0a72cc;
    color: #fff;
}
.grip {
    position: absolute;
    right: 0;
    bottom: 0;
    width: 9px;
    height: 9px;
}
.ink {
    position: absolute;
    left: 0;
    top: 0;
    width: 100%;
    height: 100%;
    pointer-events: none;
}
```
